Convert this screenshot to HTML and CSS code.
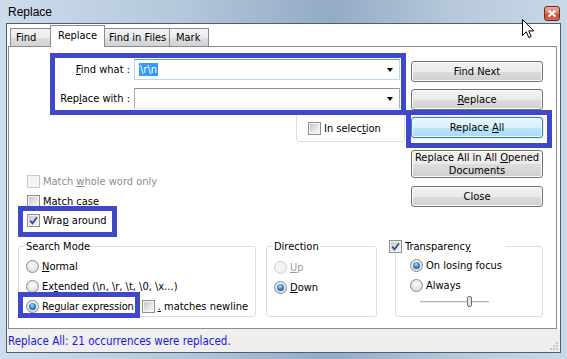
FILE: index.html
```html
<!DOCTYPE html>
<html>
    <head>
        <meta charset="utf-8">
        <title>Replace</title>
        <link rel="stylesheet" href="styles.css">
    </head>
    <body>
        <div class="window">
            <div class="titlebar">
                <span class="title">Replace</span>
                <span class="close-btn">
                    <svg width="10" height="9" viewBox="0 0 10 9"><path d="M1.5 1.5 L8.5 7.5 M8.5 1.5 L1.5 7.5" stroke="#fff" stroke-width="2.2"/></svg>
                </span>
            </div>
            <div class="client">
                <div class="tabs">
                    <span class="tab tab-find">Find</span>
                    <span class="tab tab-replace active">Replace</span>
                    <span class="tab tab-files">Find in Files</span>
                    <span class="tab tab-mark">Mark</span>
                </div>
                <div class="panel">
                    <div class="top">
                        <div class="left">
                            <div class="fields">
                                <div class="field-row">
                                    <span class="field-label"><u>F</u>ind what :</span>
                                    <div class="combo focused"><span class="sel">\r\n</span><span class="arrow"></span></div>
                                </div>
                                <div class="field-row">
                                    <span class="field-label">Rep<u>l</u>ace with :</span>
                                    <div class="combo"><span class="arrow"></span></div>
                                </div>
                            </div>
                            <div class="insel-box">
                                <span class="cb"></span><span class="opt-text">In selec<u>t</u>ion</span>
                            </div>
                            <div class="checks">
                                <div class="opt disabled"><span class="cb"></span><span class="opt-text">Match <u>w</u>hole word only</span></div>
                                <div class="opt"><span class="cb"></span><span class="opt-text">Match case</span></div>
                                <div class="opt"><span class="cb"><svg width="9" height="9" viewBox="0 0 9 9"><path d="M1.2 4.6 L3.5 7.3 L8 1.2" fill="none" stroke="#34488c" stroke-width="1.7"/></svg></span><span class="opt-text">Wra<u>p</u> around</span></div>
                            </div>
                        </div>
                        <div class="buttons">
                            <div class="btn">Find Next</div>
                            <div class="btn"><span><u>R</u>eplace</span></div>
                            <div class="btn hot"><span>Replace <u>A</u>ll</span></div>
                            <div class="btn tall"><span>Replace All in All <u>O</u>pened<br>Documents</span></div>
                            <div class="btn">Close</div>
                        </div>
                    </div>
                    <div class="groups">
                        <fieldset class="group search-mode">
                            <legend>Search Mode</legend>
                            <div class="opt first"><span class="rb"></span><span class="opt-text"><u>N</u>ormal</span></div>
                            <div class="opt"><span class="rb"></span><span class="opt-text">Ex<u>t</u>ended (\n, \r, \t, \0, \x...)</span></div>
                            <div class="opt last"><span class="rb on"></span><span class="opt-text rx-text">Re<u>g</u>ular expression</span><span class="cb"></span><span class="opt-text"><u>.</u> matches newline</span></div>
                        </fieldset>
                        <fieldset class="group direction">
                            <legend>Direction</legend>
                            <div class="opt first disabled"><span class="rb"></span><span class="opt-text"><u>U</u>p</span></div>
                            <div class="opt"><span class="rb on"></span><span class="opt-text"><u>D</u>own</span></div>
                        </fieldset>
                        <fieldset class="group transparency">
                            <legend><span class="cb"><svg width="9" height="9" viewBox="0 0 9 9"><path d="M1.2 4.6 L3.5 7.3 L8 1.2" fill="none" stroke="#34488c" stroke-width="1.7"/></svg></span><span class="opt-text">Transparenc<u>y</u></span></legend>
                            <div class="opt first"><span class="rb on"></span><span class="opt-text">On losing focus</span></div>
                            <div class="opt"><span class="rb"></span><span class="opt-text">Always</span></div>
                            <div class="slider"><span class="thumb"></span></div>
                        </fieldset>
                    </div>
                </div>
                <div class="status">
                    <span>Replace All: 21 occurrences were replaced.</span>
                    <svg class="grip" width="9" height="9" viewBox="0 0 9 9">
                        <rect x="7" y="1" width="2" height="2" fill="#c4c4c4"/>
                        <rect x="4" y="4" width="2" height="2" fill="#c4c4c4"/>
                        <rect x="7" y="4" width="2" height="2" fill="#c4c4c4"/>
                        <rect x="1" y="7" width="2" height="2" fill="#c4c4c4"/>
                        <rect x="4" y="7" width="2" height="2" fill="#c4c4c4"/>
                        <rect x="7" y="7" width="2" height="2" fill="#c4c4c4"/>
                    </svg>
                </div>
            </div>
            <!-- blue marks drawn over the dialog -->
            <div class="mark mark-fields"></div>
            <div class="mark mark-replace-all"></div>
            <div class="mark mark-wrap"></div>
            <div class="mark mark-regex"></div>
            <svg class="cursor" width="14" height="22" viewBox="0 0 14 22">
                <path d="M0.5 0.5 L0.5 16.5 L4.3 12.8 L6.8 18.6 L9.2 17.6 L6.8 11.9 L11.8 11.9 Z" fill="#fff" stroke="#000" stroke-width="1"/>
            </svg>
        </div>
    </body>
</html>
```

FILE: styles.css
```css
body {
    margin: 0px;
    padding: 0px;
    background-color: #fff;
    font-family: "DejaVu Sans Condensed", "Liberation Sans", Arial, sans-serif;
    font-size: 11px;
    color: #000;
}
u {
    text-decoration-thickness: 1px;
    text-underline-offset: 1px;
}
.window {
    position: relative;
    width: 567px;
    height: 359px;
    overflow: hidden;
    background: linear-gradient(to right, #cddced 0%, #b4c7db 32%, #93abc5 58%, #b6c8da 80%, #cad9e8 100%);
}
.titlebar {
    display: flex;
    height: 23px;
}
.title {
    padding-left: 8px;
    line-height: 24px;
    font-family: "Liberation Sans", Arial, sans-serif;
    font-size: 12px;
}
.close-btn {
    display: flex;
    align-items: center;
    justify-content: center;
    box-sizing: border-box;
    width: 16px;
    height: 15px;
    margin: 6px 7px 0px auto;
    border: solid 1px #6f2c22;
    border-radius: 3px;
    background: linear-gradient(#eba99b 0%, #d9735f 50%, #c74a33 51%, #d6674d 100%);
}
.client {
    box-sizing: border-box;
    width: 555px;
    height: 330px;
    margin-left: 6px;
    border: solid 1px #4e5f72;
    background-color: #fff;
}
.tabs {
    display: flex;
    align-items: flex-end;
    height: 22px;
    padding-left: 3px;
}
.tab {
    box-sizing: border-box;
    height: 18px;
    padding-left: 5px;
    line-height: 18px;
    white-space: nowrap;
    border: solid 1px #898c95;
    border-bottom: none;
    margin-right: -1px;
    background: linear-gradient(#f3f3f3 0%, #ebebeb 50%, #dedede 51%, #d2d2d2 100%);
}
.tab.active {
    position: relative;
    z-index: 2;
    height: 22px;
    margin-bottom: -1px;
    padding-left: 7px;
    line-height: 20px;
    background: #fff;
}
.tab-find { width: 41px; }
.tab-replace { width: 55px; }
.tab-files { width: 66px; padding-left: 4px; }
.tab-mark { width: 40px; padding-left: 6px; }

.panel {
    box-sizing: border-box;
    width: 549px;
    height: 283px;
    margin-left: 1px;
    border: solid 1px #898c95;
}
.top {
    display: flex;
    height: 193px;
}
.left {
    width: 393px;
}
.fields {
    padding-top: 12px;
}
.field-row {
    display: flex;
    align-items: center;
    height: 21px;
    margin-bottom: 8px;
}
.field-label {
    box-sizing: border-box;
    width: 125px;
    padding-right: 4px;
    text-align: right;
}
.combo {
    display: flex;
    align-items: center;
    box-sizing: border-box;
    width: 266px;
    height: 21px;
    padding-left: 4px;
    border: solid 1px #abadb3;
    border-top-color: #8e9196;
    border-bottom-color: #e3e9ef;
}
.combo.focused {
    border-color: #6b9ed0 #b8d4ee #b8d4ee #b8d4ee;
}
.sel {
    padding: 0px 1px;
    line-height: 13px;
    color: #fff;
    background-color: #3399ff;
}
.arrow {
    width: 0px;
    height: 0px;
    margin-left: auto;
    margin-right: 6px;
    border-left: solid 3.5px transparent;
    border-right: solid 3.5px transparent;
    border-top: solid 4px #000;
}
.insel-box {
    display: flex;
    align-items: center;
    box-sizing: border-box;
    width: 109px;
    height: 31px;
    margin: -6px 0px 0px 287px;
    padding: 4px 0px 0px 11px;
    border: solid 1px #d5dfe5;
    border-radius: 3px;
}
.checks {
    margin: 33px 0px 0px 18px;
}
.checks .opt {
    margin-bottom: 6.5px;
}

.opt {
    display: flex;
    align-items: center;
    height: 13px;
    white-space: nowrap;
}
.opt-text {
    margin-left: 3px;
}
.opt.disabled {
    color: #8d8d8d;
}
.cb {
    display: flex;
    flex: none;
    box-sizing: border-box;
    width: 13px;
    height: 13px;
    padding: 1px;
    border: solid 1px #8e8f8f;
    background: linear-gradient(135deg, #c3c8cf 0%, #e4e6e9 60%, #f6f6f6 100%) content-box;
    box-shadow: inset 0 0 0 1px #f4f4f4;
}
.disabled .cb {
    border-color: #cacaca;
    background: #f4f4f4 content-box;
}
.rb {
    display: flex;
    align-items: center;
    justify-content: center;
    flex: none;
    box-sizing: border-box;
    width: 13px;
    height: 13px;
    border: solid 1px #8b8b8b;
    border-radius: 50%;
    background: radial-gradient(circle at 50% 40%, #fdfdfd 0%, #e6e6e6 55%, #c9c9c9 100%);
}
.rb.on::after {
    content: "";
    width: 7px;
    height: 7px;
    border-radius: 50%;
    background: radial-gradient(circle at 45% 35%, #b4e3fd 0%, #3a90d6 40%, #0d3e78 100%);
}
.disabled .rb {
    border-color: #cbcbcb;
    background: #f4f4f4;
}

.buttons {
    width: 132px;
    margin: 14px 0px 0px 9px;
}
.btn {
    display: flex;
    align-items: center;
    justify-content: center;
    box-sizing: border-box;
    height: 21px;
    margin-bottom: 7px;
    text-align: center;
    line-height: 13px;
    border: solid 1px #707070;
    border-radius: 3px;
    background: linear-gradient(#f2f2f2 0%, #ebebeb 50%, #dddddd 51%, #cfcfcf 100%);
    box-shadow: inset 0 0 0 1px #fbfbfb;
}
.btn.hot {
    margin-top: 1px;
    margin-bottom: 12px;
    border-color: #3c7fb1;
    background: linear-gradient(#eaf6fd 0%, #d9f0fc 50%, #bee6fd 51%, #a7d9f5 100%);
    box-shadow: inset 0 0 0 1px #eef8ff, 0 0 2px #7cc3ef;
}
.btn.tall {
    height: 28px;
    margin-bottom: 8px;
}

.groups {
    display: flex;
    padding-left: 9px;
}
.group {
    box-sizing: border-box;
    height: 77px;
    margin: 0px;
    padding: 0px 7px;
    min-width: 0px;
    border: solid 1px #d5dfe5;
    border-radius: 3px;
}
.group legend {
    padding: 0px 1px;
    margin-left: -1px;
    line-height: 13px;
}
.group .opt {
    margin-bottom: 7px;
}
.group .opt.first {
    margin-top: 7px;
}
.group .opt.last {
    margin-bottom: 0px;
}
.search-mode {
    width: 238px;
}
.rx-text {
    width: 106px;
    letter-spacing: -0.15px;
}
.direction {
    width: 111px;
    margin-left: 10px;
}
.direction .opt.first {
    margin-top: 8px;
}
.direction .opt.disabled {
    color: #9a9aa6;
}
.transparency {
    width: 148px;
    margin-left: 18px;
}
.transparency legend {
    display: flex;
    align-items: center;
    width: 117px;
    margin-left: -14px;
    padding: 0px;
    background: #fff;
}
.transparency .opt {
    margin-left: 7px;
}
.transparency .opt.first {
    margin-top: 6px;
}
.slider {
    position: relative;
    width: 69px;
    height: 11px;
    margin: -3px 0px 0px 17px;
}
.slider::before {
    content: "";
    display: block;
    height: 5px;
    border-bottom: solid 1px #b3b3b3;
    box-shadow: 0 1px 0 #e8e8e8;
}
.thumb {
    position: absolute;
    left: 47px;
    top: 0px;
    box-sizing: border-box;
    width: 5px;
    height: 11px;
    border: solid 1px #6f6f6f;
    border-radius: 2px;
    background: linear-gradient(to right, #f4f4f4, #d6d6d6);
}

.status {
    display: flex;
    align-items: center;
    height: 23px;
    padding-left: 1px;
    font-size: 11.5px;
    color: #1717e6;
    background-color: #f0eeee;
}
.grip {
    margin: 10px 2px 0px auto;
}

.mark {
    position: absolute;
    box-sizing: border-box;
    border: solid 5px #3f48cc;
}
.mark-fields {
    left: 50px;
    top: 53px;
    width: 356px;
    height: 62px;
}
.mark-replace-all {
    left: 406px;
    top: 110px;
    width: 146px;
    height: 38px;
}
.mark-wrap {
    left: 18px;
    top: 206px;
    width: 99px;
    height: 31px;
}
.mark-regex {
    left: 18px;
    top: 292px;
    width: 122px;
    height: 26px;
}
.cursor {
    position: absolute;
    left: 522px;
    top: 19px;
}
```
